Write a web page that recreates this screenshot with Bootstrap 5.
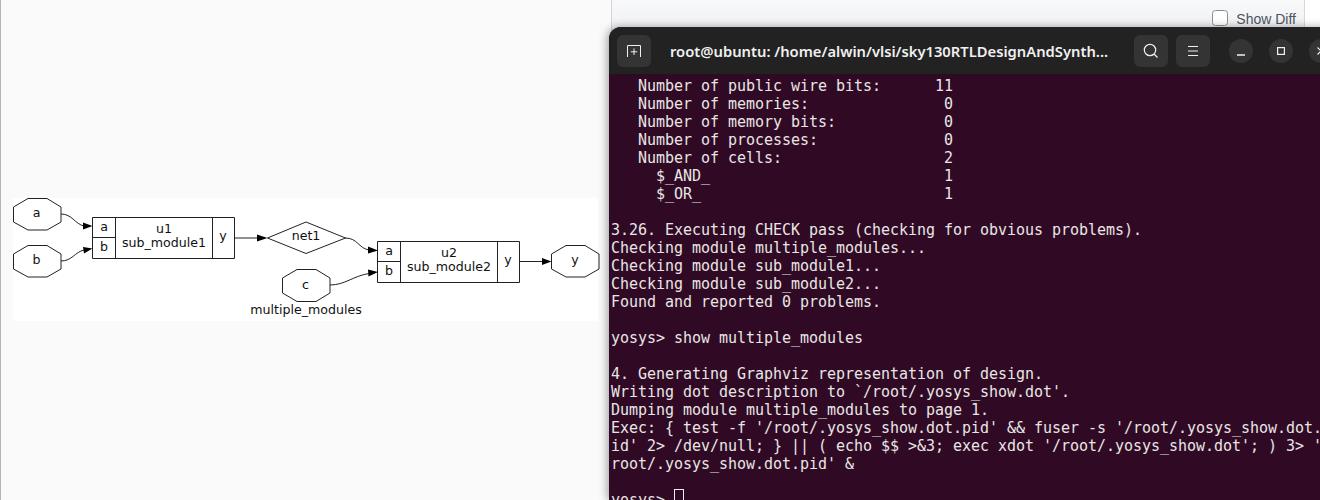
<!DOCTYPE html>
<html lang="en">
<head>
  <meta charset="UTF-8">
  <meta name="viewport" content="width=device-width, initial-scale=1">
  <link href="https://cdn.jsdelivr.net/npm/bootstrap@5.3.2/dist/css/bootstrap.min.css" rel="stylesheet">
  <script src="https://cdn.jsdelivr.net/npm/bootstrap@5.3.2/dist/js/bootstrap.bundle.min.js"></script>
  <title>yosys show</title>
  <style>
    html, body { height: 500px; overflow: hidden; background: #fff; }
    .desk { height: 500px; position: relative; overflow: hidden; }
    .left-pane { width: 612px; height: 500px; background: #fafafa; border-left: 1px solid #b4b4b4; border-right: 1px solid #d4d4d4; padding: 198px 0 0 12px; }
    .graph-svg { display: block; width: 585px; height: 123px; background: #fff; overflow: visible; }
    .graph-svg text { font-family: "DejaVu Sans", sans-serif; font-size: 12.6px; fill: #111; text-anchor: middle; }
    .graph-svg .shape { fill: none; stroke: #222; stroke-width: 1; }
    .mid-pane { width: 693px; height: 500px; background: linear-gradient(#f8f9fb, #f0f0f2 30px); border-right: 1px solid #d8d8d8; padding: 10px 8px 0 0; }
    .diff-check { font-family: "Liberation Sans", sans-serif; font-size: 14px; color: #4a5560; gap: 8px; line-height: 18px; }
    .diff-check input { width: 16px; height: 16px; margin: 0; border: 1px solid #8a8f96; border-radius: 3px; }
    .term-win { position: absolute; left: 609px; top: 27px; width: 730px; height: 473px; border-radius: 12px 12px 0 0; background: #300a24; box-shadow: -2px 0 8px rgba(0,0,0,.35); overflow: hidden; }
    .term-head { height: 47px; background: #222222; padding: 8px 6px 7px 8px; }
    .head-btn { width: 34px; height: 32px; background: #343434; border-radius: 6px; }
    .head-circle { width: 24px; height: 24px; background: #343434; border-radius: 50%; }
    .term-title { font-family: "Noto Sans", sans-serif; font-weight: 600; font-size: 14.75px; color: #f0f0f0; padding-left: 19px; white-space: nowrap; }
    .term-ctl { margin-left: 19px; }
    .term-body { margin: 0; padding: 3px 0 0 2px; height: 426px; font-family: "DejaVu Sans Mono", monospace; font-size: 15px; letter-spacing: -.03px; line-height: 18px; color: #e8e6e4; white-space: pre; overflow: hidden; }
    .term-cursor { display: inline-block; width: 10px; height: 18px; border: 1px solid #eee; vertical-align: top; margin-top: -2px; }
  </style>
</head>
<body>
<div class="desk d-flex">
  <div class="left-pane">
    <svg class="graph-svg" viewBox="13 198 585 123">
      <polygon class="shape" points="28,198.5 47,198.5 61,207 61,222 47,230 28,230 13.5,222 13.5,207"/>
      <text x="36.5" y="217">a</text>
      <polygon class="shape" points="28,245.5 47,245.5 61,254 61,269 47,277 28,277 13.5,269 13.5,254"/>
      <text x="36.5" y="264">b</text>
      <polygon class="shape" points="297,269.5 316,269.5 330,278 330,293 316,301.5 297,301.5 282.5,293 282.5,278"/>
      <text x="305.5" y="289">c</text>
      <text x="306" y="314">multiple_modules</text>
      <polygon class="shape" points="566,245.5 585,245.5 599,254 599,269 585,277 566,277 551.5,269 551.5,254"/>
      <text x="575" y="264">y</text>

      <path class="shape" d="M92.5 217.5H234.5V258.5H92.5ZM115.5 217.5V258.5M212.5 217.5V258.5M92.5 237.5H115.5"/>
      <text x="104" y="231">a</text>
      <text x="104" y="251">b</text>
      <text x="164" y="233">u1</text>
      <text x="164" y="247">sub_module1</text>
      <text x="223" y="240">y</text>

      <path class="shape" d="M377.5 241.5H519.5V282.5H377.5ZM400.5 241.5V282.5M497.5 241.5V282.5M377.5 261.5H400.5"/>
      <text x="389" y="255">a</text>
      <text x="389" y="275">b</text>
      <text x="449" y="257">u2</text>
      <text x="449" y="271">sub_module2</text>
      <text x="508" y="264">y</text>

      <polygon class="shape" points="267.5,238 306,222 345.5,238 306,253.5"/>
      <text x="306" y="240">net1</text>

      <path class="shape" d="M61 214C72 214 75 224 84 226"/>
      <polygon points="92.5,226 83,222.5 83,229.5" fill="#000"/>
      <path class="shape" d="M61 261C72 261 75 252 84 250"/>
      <polygon points="92.5,248.5 83,247 84,253.5" fill="#000"/>
      <path class="shape" d="M234.5 238H258"/>
      <polygon points="267.5,238 257,234.5 257,241.5" fill="#000"/>
      <path class="shape" d="M345 238C358 238 358 248 369 250"/>
      <polygon points="378,250.5 368,246.5 368,253.5" fill="#000"/>
      <path class="shape" d="M330 285C345 285 353 276 369 273.5"/>
      <polygon points="378,272 368,269.5 368.5,276.5" fill="#000"/>
      <path class="shape" d="M519.5 261.5H543"/>
      <polygon points="551.5,261.5 542,258 542,265" fill="#000"/>
    </svg>
  </div>
  <div class="mid-pane d-flex justify-content-end">
    <label class="diff-check d-flex align-items-start"><input type="checkbox" class="form-check-input"> Show Diff</label>
  </div>
  <div class="term-win">
    <div class="term-head d-flex align-items-center">
      <div class="head-btn d-flex align-items-center justify-content-center">
        <svg width="16" height="14" viewBox="0 0 16 14" fill="none" stroke="#f0f0f0" stroke-width="1"><path d="M1.5 13V1.5H14.5V13M8 4.5V11M4.8 7.8H11.2"/></svg>
      </div>
      <div class="term-title flex-grow-1">root@ubuntu: /home/alwin/vlsi/sky130RTLDesignAndSynth...</div>
      <div class="d-flex gap-2">
        <div class="head-btn d-flex align-items-center justify-content-center">
          <svg width="16" height="16" viewBox="0 0 16 16" fill="none" stroke="#f0f0f0" stroke-width="1.2"><circle cx="7" cy="7" r="5.7"/><path d="M11 11L14.5 14.5"/></svg>
        </div>
        <div class="head-btn d-flex align-items-center justify-content-center">
          <svg width="12" height="12" viewBox="0 0 12 12" fill="none" stroke="#f0f0f0" stroke-width="1"><path d="M1 1.5H11M1 6H11M1 10.5H11"/></svg>
        </div>
      </div>
      <div class="d-flex term-ctl">
        <div class="head-circle d-flex align-items-center justify-content-center">
          <svg width="10" height="10" viewBox="0 0 10 10" fill="none" stroke="#f0f0f0" stroke-width="1.4"><path d="M1 9H9"/></svg>
        </div>
        <div class="head-circle d-flex align-items-center justify-content-center ms-3">
          <svg width="10" height="10" viewBox="0 0 10 10" fill="none" stroke="#f0f0f0" stroke-width="1.2"><rect x="1.6" y="1.6" width="6.8" height="6.8"/></svg>
        </div>
        <div class="head-circle d-flex align-items-center justify-content-center ms-3">
          <svg width="10" height="10" viewBox="0 0 10 10" fill="none" stroke="#f0f0f0" stroke-width="1.2"><path d="M1.5 1.5L8.5 8.5M8.5 1.5L1.5 8.5"/></svg>
        </div>
      </div>
    </div>
<pre class="term-body">   Number of public wire bits:      11
   Number of memories:               0
   Number of memory bits:            0
   Number of processes:              0
   Number of cells:                  2
     $_AND_                          1
     $_OR_                           1

3.26. Executing CHECK pass (checking for obvious problems).
Checking module multiple_modules...
Checking module sub_module1...
Checking module sub_module2...
Found and reported 0 problems.

yosys&gt; show multiple_modules

4. Generating Graphviz representation of design.
Writing dot description to `/root/.yosys_show.dot'.
Dumping module multiple_modules to page 1.
Exec: { test -f '/root/.yosys_show.dot.pid' &amp;&amp; fuser -s '/root/.yosys_show.dot.p
id' 2&gt; /dev/null; } || ( echo $$ &gt;&amp;3; exec xdot '/root/.yosys_show.dot'; ) 3&gt; '/
root/.yosys_show.dot.pid' &amp;

yosys&gt; <span class="term-cursor"></span></pre>
  </div>
</div>
</body>
</html>
